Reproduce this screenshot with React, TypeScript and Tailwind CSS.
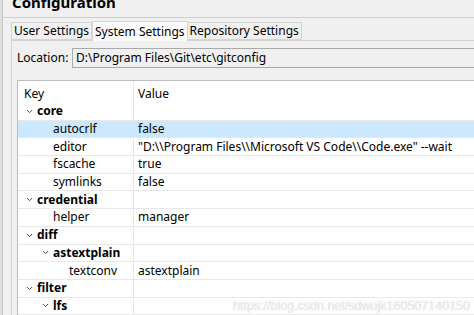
import { ChevronDown } from "lucide-react";

type Row = {
  key: string;
  value?: string;
  depth: number;
  group?: boolean;
  selected?: boolean;
};

const rows: Row[] = [
  { key: "core", depth: 0, group: true },
  { key: "autocrlf", value: "false", depth: 1, selected: true },
  { key: "editor", value: '"D:\\\\Program Files\\\\Microsoft VS Code\\\\Code.exe" --wait', depth: 1 },
  { key: "fscache", value: "true", depth: 1 },
  { key: "symlinks", value: "false", depth: 1 },
  { key: "credential", depth: 0, group: true },
  { key: "helper", value: "manager", depth: 1 },
  { key: "diff", depth: 0, group: true },
  { key: "astextplain", depth: 1, group: true },
  { key: "textconv", value: "astextplain", depth: 2 },
  { key: "filter", depth: 0, group: true },
  { key: "lfs", depth: 1, group: true },
];

const tabs = ["User Settings", "System Settings", "Repository Settings"];

export default function App() {
  return (
    <div
      className="relative flex h-[315px] w-[474px] overflow-hidden bg-[#f0f0f0] text-[12px] text-black"
      style={{ fontFamily: '"Noto Sans", "Open Sans", sans-serif' }}
    >
      <div className="w-[3px] shrink-0 border-r border-[#c9c9c9] bg-[#dedede]" />
      <div className="flex min-w-0 flex-1 flex-col">
        {/* title */}
        <div className="h-[18px] shrink-0 overflow-hidden border-b border-[#cfcfcf] pl-[9px]">
          <div className="mt-[-8px] text-[15px] font-bold leading-[20px]">Configuration</div>
        </div>

        {/* tabs */}
        <div className="mt-[3px] flex h-[19px] shrink-0 items-end pl-[8px]">
          {tabs.map((t, i) =>
            i === 1 ? (
              <div
                key={t}
                className="relative z-10 -mb-px flex h-[20px] items-center border border-b-0 border-[#d4d4d4] bg-[#fbfbfb] px-[2px] leading-none"
              >
                {t}
              </div>
            ) : (
              <div
                key={t}
                className="flex h-[18px] items-center border-y border-r border-[#d4d4d4] bg-[#f0f0f0] px-[2px] leading-none first:border-l"
              >
                {t}
              </div>
            )
          )}
        </div>

        {/* panel */}
        <div className="ml-[8px] flex flex-1 flex-col border-l border-t border-[#d4d4d4] pl-[5px]">
          <div className="mt-[7px] flex h-[20px] items-center">
            <span className="w-[55px] shrink-0">Location:</span>
            <div className="flex h-[20px] flex-1 items-center border-y border-l border-[#a9a9a9] bg-[#f0f0f0] pl-[3px]">
              D:\Program Files\Git\etc\gitconfig
            </div>
          </div>

          <div className="mt-[12px] flex-1 border-l border-t border-[#bdbdbd] bg-white">
            <div className="flex h-[22px]">
              <div className="h-full w-[116px] shrink-0 border-r border-[#e6e6e6] pl-[6px] pt-[4px]">Key</div>
              <div className="pl-[4px] pt-[4px]">Value</div>
            </div>
            {rows.map((r, i) => (
              <div
                key={i}
                className={`flex h-[17.7px] items-center border-b border-[#e8e8e8] leading-none ${
                  r.selected ? "bg-[#cce8ff]" : ""
                }`}
              >
                <div
                  className="flex h-full w-[116px] shrink-0 items-center border-r border-[#e6e6e6]"
                  style={{ paddingLeft: 7 + r.depth * 16 }}
                >
                  {r.group ? (
                    <>
                      <ChevronDown size={9} strokeWidth={2.5} className="mr-[3px] text-[#333]" />
                      <span className="font-bold">{r.key}</span>
                    </>
                  ) : (
                    <span className="pl-[12px]">{r.key}</span>
                  )}
                </div>
                <div className="whitespace-nowrap pl-[4px]">{r.value ?? ""}</div>
              </div>
            ))}
          </div>
        </div>
      </div>

      <div
        className="pointer-events-none absolute bottom-[1px] left-[233px] whitespace-nowrap text-[12.5px] leading-[15px] text-[#eeeeee]"
        style={{ fontFamily: '"Liberation Sans", sans-serif', textShadow: "0 0 1px #cfcfcf" }}
      >
        https://blog.csdn.net/sdwujk160507140150
      </div>
    </div>
  );
}
